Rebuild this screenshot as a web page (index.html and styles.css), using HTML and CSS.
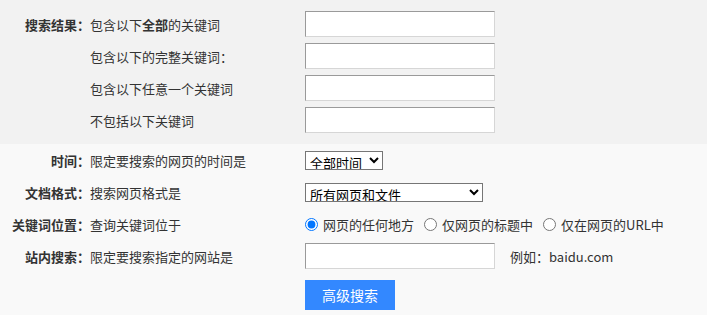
FILE: index.html
```html
<!DOCTYPE html>
<html lang="zh-CN">
<head>
<meta charset="utf-8">
<title>高级搜索</title>
<link rel="stylesheet" href="styles.css">
</head>
<body>
<form class="adv-form">
  <div class="group group-main">
    <div class="row">
      <div class="label">搜索结果：</div>
      <div class="desc">包含以下<b>全部</b>的关键词</div>
      <div class="ctrl"><input type="text" class="text-input"></div>
    </div>
    <div class="row">
      <div class="label"></div>
      <div class="desc">包含以下的完整关键词：</div>
      <div class="ctrl"><input type="text" class="text-input"></div>
    </div>
    <div class="row">
      <div class="label"></div>
      <div class="desc">包含以下任意一个关键词</div>
      <div class="ctrl"><input type="text" class="text-input"></div>
    </div>
    <div class="row">
      <div class="label"></div>
      <div class="desc">不包括以下关键词</div>
      <div class="ctrl"><input type="text" class="text-input"></div>
    </div>
  </div>
  <div class="group group-other">
    <div class="row">
      <div class="label">时间：</div>
      <div class="desc">限定要搜索的网页的时间是</div>
      <div class="ctrl">
        <select class="sel sel-time">
          <option>全部时间</option>
          <option>最近一天</option>
          <option>最近一周</option>
          <option>最近一月</option>
          <option>最近一年</option>
        </select>
      </div>
    </div>
    <div class="row">
      <div class="label">文档格式：</div>
      <div class="desc">搜索网页格式是</div>
      <div class="ctrl">
        <select class="sel sel-format">
          <option>所有网页和文件</option>
          <option>PDF</option>
        </select>
      </div>
    </div>
    <div class="row">
      <div class="label">关键词位置：</div>
      <div class="desc">查询关键词位于</div>
      <div class="ctrl radios">
        <label class="radio-item"><input type="radio" name="pos" checked>网页的任何地方</label>
        <label class="radio-item"><input type="radio" name="pos">仅网页的标题中</label>
        <label class="radio-item"><input type="radio" name="pos">仅在网页的URL中</label>
      </div>
    </div>
    <div class="row">
      <div class="label">站内搜索：</div>
      <div class="desc">限定要搜索指定的网站是</div>
      <div class="ctrl"><input type="text" class="text-input"><span class="hint">例如：baidu.com</span></div>
    </div>
    <div class="submit-row">
      <button type="button" class="btn">高级搜索</button>
    </div>
  </div>
</form>
</body>
</html>
```

FILE: styles.css
```css
html, body {
  margin: 0;
  padding: 0;
  background: #f9f9f9;
}
body {
  font-family: "Noto Sans CJK SC", "Liberation Sans", sans-serif;
  font-size: 13px;
  color: #333;
}
.group-main {
  background: #f2f2f2;
  padding: 8px 0;
}
.group-other {
  background: #f9f9f9;
}
.row {
  display: grid;
  grid-template-columns: 90px 215px auto;
  height: 32px;
  align-items: center;
}
.label {
  text-align: right;
  font-weight: bold;
  white-space: nowrap;
}
.desc {
  white-space: nowrap;
}
.desc b {
  font-weight: bold;
}
.ctrl {
  display: flex;
  align-items: center;
  white-space: nowrap;
}
.text-input {
  box-sizing: border-box;
  width: 190px;
  height: 26px;
  margin: 0;
  padding: 0 4px;
  background: #fff;
  border-style: solid;
  border-width: 1px;
  border-color: #9a9a9a #d6d6d6 #d6d6d6 #9a9a9a;
  outline: none;
  font: inherit;
}
.sel {
  box-sizing: border-box;
  height: 19px;
  margin: 0;
  font-family: "Noto Sans CJK SC", "Liberation Sans", sans-serif;
  font-size: 13px;
  color: #000;
  background: #fff;
  border: 1px solid #767676;
  border-radius: 0;
  padding: 0;
}
.sel-time {
  width: 78px;
}
.sel-format {
  width: 178px;
}
.radio-item {
  display: inline-flex;
  align-items: center;
  margin-right: 10px;
}
.radio-item input {
  width: 13px;
  height: 13px;
  margin: 0 5px 0 0;
}
.hint {
  margin-left: 15px;
}
.submit-row {
  padding: 8px 0 5px 305px;
}
.btn {
  width: 90px;
  height: 30px;
  border: none;
  margin: 0;
  padding: 0;
  background: #3388ff;
  color: #fff;
  font-family: "Noto Sans CJK SC", "Liberation Sans", sans-serif;
  font-size: 14px;
  cursor: pointer;
}
```
